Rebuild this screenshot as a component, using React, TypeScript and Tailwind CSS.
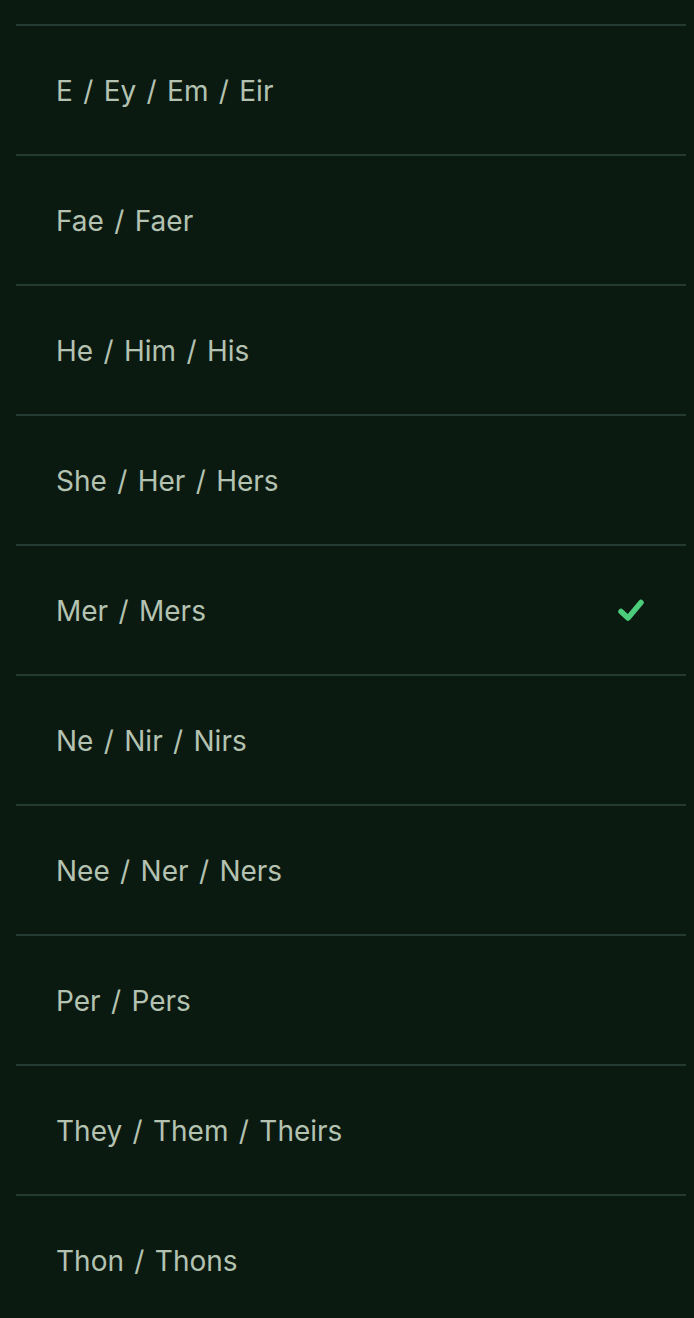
import { useState } from "react";

const pronouns = [
  "E / Ey / Em / Eir",
  "Fae / Faer",
  "He / Him / His",
  "She / Her / Hers",
  "Mer / Mers",
  "Ne / Nir / Nirs",
  "Nee / Ner / Ners",
  "Per / Pers",
  "They / Them / Theirs",
  "Thon / Thons",
];

function CheckIcon() {
  return (
    <svg width="28" height="24" viewBox="0 0 28 24" fill="none">
      <path
        d="M4 13.5 L11 20 L24 4.5"
        stroke="#4ccd7b"
        strokeWidth="5.5"
        strokeLinecap="round"
        strokeLinejoin="round"
      />
    </svg>
  );
}

export default function App() {
  const [selected, setSelected] = useState("Mer / Mers");

  return (
    <div
      className="w-full h-[1318px] overflow-hidden bg-[#0b1a10] pt-6"
      style={{ fontFamily: "Inter, 'Noto Sans', sans-serif" }}
    >
      <ul className="pl-4 pr-2">
        {pronouns.map((p) => (
          <li key={p} className="border-t-2 border-[#253a33]">
            <button
              onClick={() => setSelected(p)}
              className="w-full h-[128px] flex items-center justify-between pl-[40px] pr-[41px] text-left"
            >
              <span className="text-[28px] text-[#b4c2b2] [word-spacing:2.5px] pt-[2px]">{p}</span>
              {selected === p && <CheckIcon />}
            </button>
          </li>
        ))}
      </ul>
    </div>
  );
}
